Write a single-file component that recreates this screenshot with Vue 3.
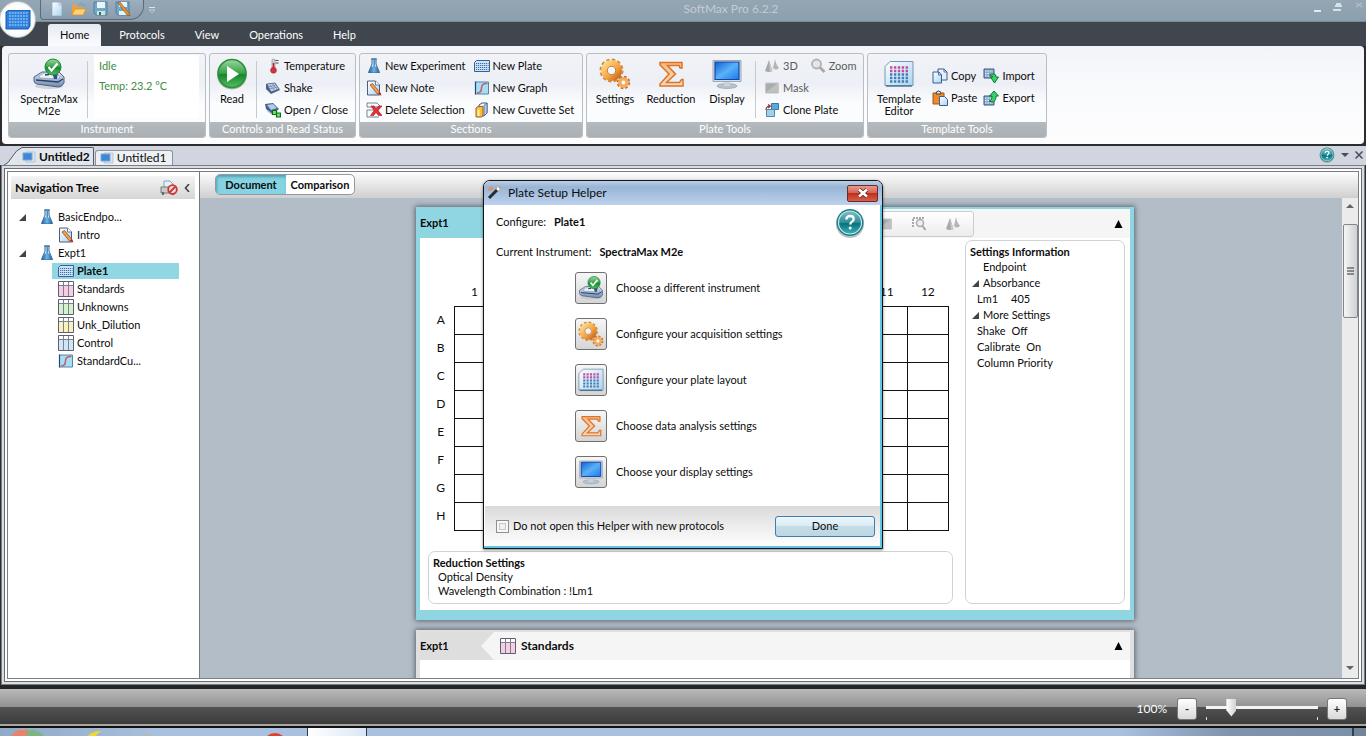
<script setup>
import { ref } from 'vue'

const tabs = ['Home', 'Protocols', 'View', 'Operations', 'Help']
const controls = [
  { icon: 'thermo', label: 'Temperature' },
  { icon: 'shake', label: 'Shake' },
  { icon: 'openclose', label: 'Open / Close' }
]
const sectionCols = [
  [
    { icon: 'flask', label: 'New Experiment' },
    { icon: 'note', label: 'New Note' },
    { icon: 'delete', label: 'Delete Selection' }
  ],
  [
    { icon: 'plate', label: 'New Plate' },
    { icon: 'graph', label: 'New Graph' },
    { icon: 'cuvette', label: 'New Cuvette Set' }
  ]
]
const plateTools = [
  { icon: 'gears', label: 'Settings' },
  { icon: 'sigma', label: 'Reduction' },
  { icon: 'display', label: 'Display' }
]
const templateCols = [
  [
    { icon: 'copy', label: 'Copy' },
    { icon: 'paste', label: 'Paste' }
  ],
  [
    { icon: 'import', label: 'Import' },
    { icon: 'export', label: 'Export' }
  ]
]
const tree = [
  { icon: 'flask', label: 'BasicEndpo...', root: true },
  { icon: 'note', label: 'Intro' },
  { icon: 'flask', label: 'Expt1', root: true },
  { icon: 'plate', label: 'Plate1', selected: true },
  { icon: 'table', label: 'Standards', tone: 'pink' },
  { icon: 'table', label: 'Unknowns', tone: 'green' },
  { icon: 'table', label: 'Unk_Dilution', tone: 'yellow' },
  { icon: 'table', label: 'Control', tone: 'blue' },
  { icon: 'graph', label: 'StandardCu...' }
]
const rows = ['A', 'B', 'C', 'D', 'E', 'F', 'G', 'H']
const options = [
  { icon: 'spectra', label: 'Choose a different instrument' },
  { icon: 'gears', label: 'Configure your acquisition settings' },
  { icon: 'template', label: 'Configure your plate layout' },
  { icon: 'sigma', label: 'Choose data analysis settings' },
  { icon: 'display', label: 'Choose your display settings' }
]
const zoom = ref(20)
const skip = ref(false)
</script>

<template>
  <div class="window">
    <svg class="defs" aria-hidden="true">
      <defs>
        <linearGradient id="gBlue" x1="0" y1="0" x2="1" y2="1"><stop offset="0" stop-color="#0f62d6" /><stop offset=".5" stop-color="#5bb0f8" /><stop offset="1" stop-color="#1a7be8" /></linearGradient>
        <linearGradient id="gGreen" x1="0" y1="0" x2="0" y2="1"><stop offset="0" stop-color="#9bd8a0" /><stop offset=".5" stop-color="#35a045" /><stop offset=".52" stop-color="#13852a" /><stop offset="1" stop-color="#52c060" /></linearGradient>
        <linearGradient id="gTeal" x1="0" y1="0" x2="0" y2="1"><stop offset="0" stop-color="#7fc0c4" /><stop offset=".5" stop-color="#2a8f98" /><stop offset=".55" stop-color="#0c6f7c" /><stop offset="1" stop-color="#3cb4bc" /></linearGradient>
        <linearGradient id="gGear" x1="0" y1="0" x2="1" y2="1"><stop offset="0" stop-color="#ffd98a" /><stop offset=".6" stop-color="#f3a341" /><stop offset="1" stop-color="#c9681e" /></linearGradient>
        <linearGradient id="gSig" x1="0" y1="0" x2="0" y2="1"><stop offset="0" stop-color="#fbb67c" /><stop offset="1" stop-color="#f6dcc0" /></linearGradient>
        <linearGradient id="gTray" x1="0" y1="0" x2="0" y2="1"><stop offset="0" stop-color="#dfe6f0" /><stop offset="1" stop-color="#6f88ad" /></linearGradient>
        <linearGradient id="gSheet" x1="0" y1="0" x2="1" y2="1"><stop offset="0" stop-color="#ffffff" /><stop offset="1" stop-color="#a9d4ef" /></linearGradient>
        <linearGradient id="gFlask" x1="0" y1="0" x2="1" y2="0"><stop offset="0" stop-color="#1f5f9c" /><stop offset=".5" stop-color="#6db4e4" /><stop offset="1" stop-color="#1f5f9c" /></linearGradient>
      </defs>
      <symbol id="logo" viewBox="0 0 26 20">
        <path d="M1 2L4 0h21v16l-2 3H1z" fill="#2f7fdc" stroke="#1857ad" />
        <path d="M4 3h19M4 6h19M4 9h19M4 12h19M4 15h19" stroke="#8fc4f6" stroke-width="1.6" stroke-dasharray="1.8 1" />
      </symbol>
      <symbol id="page" viewBox="0 0 16 16"><path d="M3 1h7l3 3v11H3z" fill="url(#gSheet)" stroke="#86a6c2" stroke-width=".7" /><path d="M10 1v3h3" fill="#fff" stroke="#86a6c2" stroke-width=".7" /></symbol>
      <symbol id="folder" viewBox="0 0 16 16"><path d="M1 4h5l1 2h6v8H1z" fill="#e9a33c" /><path d="M7 4q3-4 6-1l1-1v4h-4l2-1q-2-3-4 0z" fill="#6fa8dc" /><path d="M1 14l3-6h11l-3 6z" fill="#fdd27c" stroke="#d98a25" stroke-width=".7" /></symbol>
      <symbol id="disk" viewBox="0 0 16 16"><path d="M1 1h13v13H3l-2-2z" fill="#6fa9c9" stroke="#4d809f" /><path d="M4 1h8v6H4z" fill="#e8f4fa" /><path d="M4 10h8v4H4z" fill="#cfe6d4" /><path d="M6 11h2v3H6z" fill="#356c84" /></symbol>
      <symbol id="diskpen" viewBox="0 0 16 16"><path d="M1 1h13v13H3l-2-2z" fill="#6fa9c9" stroke="#4d809f" /><path d="M4 1h8v5H4zM4 10h8v4H4z" fill="#eaf3f8" /><path d="M3 2l2-1 9 11 1 3-3-1z" fill="#e89434" stroke="#8b4a14" stroke-width=".6" /></symbol>
      <symbol id="spectra" viewBox="0 0 34 32">
        <ellipse cx="17" cy="28" rx="14" ry="3" fill="#b9bec6" opacity=".6" />
        <path d="M2 19l8-5h17l5 5v6q-2 4-6 4L5 26q-3-1-3-3z" fill="url(#gTray)" stroke="#4b6286" />
        <path d="M7 18l5-3h12l4 4-2 2-18-1z" fill="#eef2f7" stroke="#8797b2" stroke-width=".7" />
        <path d="M13 17l4-.5M4 22l22 2 5-3" fill="none" stroke="#29406a" stroke-width="1.3" />
        <path d="M20 14h6l-1 7h-3z" fill="#31508a" />
        <circle cx="21" cy="9" r="8" fill="url(#gGreen)" stroke="#1e8a35" />
        <path d="M16.500 9l3 3.500 6-7" fill="none" stroke="#fff" stroke-width="2.200" />
      </symbol>
      <symbol id="read" viewBox="0 0 32 32"><circle cx="16" cy="16.500" r="15" fill="#a5aaa5" /><circle cx="16" cy="15.500" r="14" fill="url(#gGreen)" stroke="#2d8f3b" stroke-width="1.500" /><path d="M11 8l12 8-12 8z" fill="#fff" /></symbol>
      <symbol id="thermo" viewBox="0 0 16 16"><path d="M7 1.500q1.500-1 3 0V10H7z" fill="#cfd5da" stroke="#8d969e" stroke-width=".7" /><path d="M7.700 5h1.600v7H7.700z" fill="#cc2029" /><circle cx="8.500" cy="12.300" r="2.900" fill="#d9303a" stroke="#9b2028" stroke-width=".6" /><path d="M10.500 2.500h3M10.500 5h3" stroke="#3b4f57" /></symbol>
      <symbol id="shake" viewBox="0 0 16 16"><path d="M1 4l9-1 5 7-9 4-5-5z" fill="#46618a" /><path d="M2 4l8-1 4 6-8 3z" fill="#c4d2e4" stroke="#40587f" stroke-width=".7" /><path d="M5 5l5 6M7.500 4l5 6M3 7l8-2M4.500 9l8-2" stroke="#7186a8" stroke-width=".8" /></symbol>
      <symbol id="openclose" viewBox="0 0 16 16"><path d="M0 2l8-1 6 6-7 5-6-5z" fill="#426292" /><path d="M2 3l6-1 4 4-6 2z" fill="#b5cae4" /><path d="M3 9l4 3" stroke="#9cb4d0" stroke-width="1.500" /><path d="M7.500 8.500h4v4h-4zM11.500 11h4v4h-4z" fill="#6fe06c" stroke="#0c6f1a" stroke-width="1.200" /></symbol>
      <symbol id="flask" viewBox="0 0 16 16"><path d="M5 1h6M6 1v5L2.500 14.500h11L10 6V1z" fill="#d5e7f5" stroke="#3a6d9b" stroke-width="1" /><path d="M7.500 1h1.500v8H7.500z" fill="#4a8cc4" /><path d="M5 8.500h6l2.500 6h-11z" fill="url(#gFlask)" /></symbol>
      <symbol id="note" viewBox="0 0 16 16"><path d="M1.500 1h8l4 4v10h-12z" fill="url(#gSheet)" stroke="#4d5d80" /><path d="M9.500 1v4h4" fill="#fff" stroke="#4d5d80" stroke-width=".8" /><path d="M4 5l2.500-1.500 7 8.500 1 3-3-1z" fill="#f0a24a" stroke="#954d22" stroke-width=".8" /><path d="M12 13.500l2-1.500 1.500 3.500z" fill="#9c2832" /></symbol>
      <symbol id="delete" viewBox="0 0 16 16"><path d="M1 1h10l3 3M1 1v4h12M1 8h12M1 8v3M1 11v4h12" fill="none" stroke="#69788a" stroke-width=".9" /><path d="M5 4l3 0 2 2.500L12.500 4H16l-4 4.500 4 5h-3.500l-2.500-3-2.500 3H4.500l3.700-5z" fill="#e2313a" stroke="#a5121f" stroke-width=".6" /></symbol>
      <symbol id="plate" viewBox="0 0 16 12"><path d="M.5 2.500l2-2h13v11H.5z" fill="#cde2f5" stroke="#35628f" /><path d="M2 3.500h12.500M2 5.500h12.500M2 7.500h12.500M2 9.500h12.500" stroke="#356db0" stroke-dasharray="1.200 .8" stroke-width="1.200" /></symbol>
      <symbol id="graph" viewBox="0 0 16 16"><path d="M1.500 2h13v12h-13z" fill="#a9dcf5" stroke="#4f87ab" /><path d="M1.500 14.500V1.500" stroke="#1e4c78" stroke-width="1.200" /><path d="M3 13q4.500 0 4.500-5t6-4.500" fill="none" stroke="#b9676c" stroke-width="1.600" /></symbol>
      <symbol id="cuvette" viewBox="0 0 16 16"><path d="M5 3l3-2h5v10l-3 3H5z" fill="#eef2f8" stroke="#3d5689" /><path d="M10 3.500L13 1v10l-3 3z" fill="#bccae4" stroke="#3d5689" stroke-width=".7" /><path d="M2 6l2-1.500h5V13l-1.500 2H2z" fill="#f7be3b" stroke="#a06914" /><path d="M3.500 7.500h2V14h-2z" fill="#fff0b0" /></symbol>
      <symbol id="gears" viewBox="0 0 32 32">
        <circle cx="12.500" cy="12.500" r="10.500" fill="none" stroke="#cf8c3a" stroke-width="3" stroke-dasharray="3.300 2.200" />
        <circle cx="12.500" cy="12.500" r="7.500" fill="#fff" fill-opacity=".4" stroke="url(#gGear)" stroke-width="6" />
        <circle cx="12.500" cy="12.500" r="4.200" fill="none" stroke="#c07a35" stroke-width="1" />
        <circle cx="24.500" cy="24.500" r="5.500" fill="none" stroke="#c4702c" stroke-width="2.500" stroke-dasharray="2.500 1.800" />
        <circle cx="24.500" cy="24.500" r="3.700" fill="#fff" stroke="#f3aa5d" stroke-width="3.500" />
      </symbol>
      <symbol id="sigma" viewBox="0 0 32 32"><path d="M5 4.500h22V10h-2l-1-2.500H12.500l8 8.500-9 8.500h13l2-3h1.500v6.500h-23V26l9-10-9-9z" fill="url(#gSig)" stroke="#d9742c" stroke-width="1.500" /></symbol>
      <symbol id="display" viewBox="0 0 32 32"><ellipse cx="16" cy="28" rx="10" ry="2.500" fill="#b9c3cc" stroke="#8a97a3" stroke-width=".6" /><path d="M13 23h6v5h-6z" fill="#c9d3dc" /><path d="M2 2.500h28v21H2z" fill="#d5dde5" stroke="#9ca9b6" /><path d="M4 4h24v17.500H4z" fill="url(#gBlue)" stroke="#1546a4" stroke-width="1.200" /></symbol>
      <symbol id="cones" viewBox="0 0 16 16"><path d="M5 2l3.500 11q-3.500 2-7.500 0z" fill="#a6a9ac" /><path d="M5 2l1 12 2.500-1z" fill="#c9cbcd" /><path d="M11 1q.5 5 4 9-3 3-6 0z" fill="#b3b6b8" /></symbol>
      <symbol id="magnify" viewBox="0 0 16 16"><circle cx="6.500" cy="6" r="4.500" fill="#e5e6e7" stroke="#b0b2b4" stroke-width="1.800" /><path d="M10 9.500l4.500 4.500" stroke="#a8aaac" stroke-width="2.800" /></symbol>
      <symbol id="mask" viewBox="0 0 16 16"><path d="M1.500 3h13v10h-13z" fill="#a9acaf" stroke="#c5c7c9" /><path d="M2 12L14 3v9z" fill="#bdbfc1" /></symbol>
      <symbol id="maskzoom" viewBox="0 0 16 16"><path d="M2 11V2h11" fill="none" stroke="#aaa" stroke-width="2" stroke-dasharray="2 1" /><circle cx="9" cy="7" r="3.500" fill="#eee" stroke="#aaa" stroke-width="1.500" /><path d="M11.500 10l3 4" stroke="#a5a5a5" stroke-width="2" /></symbol>
      <symbol id="clone" viewBox="0 0 16 16"><path d="M7.500 1.500h7v6h-7z" fill="#5ca7dc" stroke="#3677aa" /><path d="M2.500 7.500h8v7h-8z" fill="#9ed1ee" stroke="#5686a8" /><path d="M2 8q0-4 4-4M4 2.500l2.500 1.500L4 6" fill="none" stroke="#9c3830" stroke-width="1.200" /></symbol>
      <symbol id="template" viewBox="0 0 30 27"><path d="M1 6l5-5h23v24H1z" fill="url(#gSheet)" stroke="#7798b0" /><path d="M2 25.500h26" stroke="#4b7796" stroke-width="1.500" /><path d="M6 7h19M6 10.500h19" stroke="#c24d9d" stroke-width="2.400" stroke-dasharray="2.400 1.500" /><path d="M6 14h19M6 17.500h19M6 21h19" stroke="#427db4" stroke-width="2.400" stroke-dasharray="2.400 1.500" /></symbol>
      <symbol id="copy" viewBox="0 0 16 16"><path d="M6 1h6l3 3v8H6z" fill="#e7f0fa" stroke="#3c5d95" /><path d="M1 4h6l2.500 3v8H1z" fill="url(#gSheet)" stroke="#3c5d95" /><path d="M6.500 4v3h3M12 1v3h3" fill="none" stroke="#3c5d95" stroke-width=".8" /></symbol>
      <symbol id="paste" viewBox="0 0 16 16"><path d="M1 3h11v11H1z" fill="#ef8a2b" stroke="#a4541a" /><path d="M4 4q0-3 2.500-3T9 4z" fill="#ddd" stroke="#444" /><path d="M7.500 6.500h5l3 3v6h-8z" fill="url(#gSheet)" stroke="#3c5d95" /></symbol>
      <symbol id="import" viewBox="0 0 16 16"><path d="M1 1h10v9H1z" fill="#8eabcd" stroke="#375883" /><path d="M2 3h8M2 5.500h8M2 8h8" stroke="#e6effa" stroke-dasharray="1.500 1" /><path d="M7 6h4q2 0 2 3h2.500l-4 6-4-6H10q0-1-3-1z" fill="#3bd069" stroke="#0b7a34" /></symbol>
      <symbol id="export" viewBox="0 0 16 16"><path d="M1 6h10v9H1z" fill="#8eabcd" stroke="#375883" /><path d="M2 8h8M2 10.500h8M2 13h8" stroke="#e6effa" stroke-dasharray="1.500 1" /><path d="M6 11q3 0 3-5H6.500l4.500-5 4.500 5H13q0 6-4 6z" fill="#3bd069" stroke="#0b7a34" /></symbol>
      <symbol id="table" viewBox="0 0 16 16"><path d="M.5 .5h15v15H.5z" fill="#fff" /><path d="M1 5h14v10H1z" fill="currentColor" /><path d="M5.500 1v14M10.500 1v14M1 4.500h14" fill="none" stroke="#7d7e92" /><path d="M.5 .5h15v15H.5z" fill="none" stroke="#5d5e70" /></symbol>
      <symbol id="noprint" viewBox="0 0 18 16"><path d="M4 7V1h6l3 3v3" fill="#e2f2f8" stroke="#7fa6b5" /><path d="M1 7h13v6H1z" fill="#c7c9cb" stroke="#777" /><path d="M3 12v3M13 12v3" stroke="#666" stroke-width="2" /><circle cx="12.500" cy="9.500" r="4.300" fill="#f1dcdb" stroke="#cd3532" stroke-width="1.800" /><path d="M9.500 12.500l6-6" stroke="#cd3532" stroke-width="1.800" /></symbol>
      <symbol id="help" viewBox="0 0 30 30"><circle cx="15" cy="16" r="14" fill="#8d9ba0" opacity=".6" /><circle cx="15" cy="14.500" r="13.500" fill="#1d7f89" /><circle cx="15" cy="14.500" r="11.500" fill="url(#gTeal)" stroke="#c9e7e9" stroke-width="1.200" /><path d="M11.300 11.500q.3-3.500 3.900-3.500 3.500 0 3.500 3 0 1.700-1.900 2.900-1.500 1-1.500 2.600" fill="none" stroke="#fff" stroke-width="2.300" /><circle cx="15.200" cy="20" r="1.500" fill="#fff" /></symbol>
      <symbol id="wand" viewBox="0 0 16 16"><path d="M2 13l9-9" stroke="#252d33" stroke-width="3" /><path d="M10 5l2-2" stroke="#fff" stroke-width="2.600" /><path d="M2 2l4 3M5 1v4M1 5l4-1" stroke="#ef8a45" stroke-width="1.300" /><circle cx="13" cy="2.500" r="1.200" fill="#e99540" /></symbol>
      <symbol id="docicon" viewBox="0 0 14 12"><path d="M4 1h9v10H4z" fill="#dbe4ee" stroke="#aab9c9" stroke-width=".7" /><path d="M1 2h9v7H1z" fill="#3f86d6" stroke="#79a9dd" /></symbol>
    </svg>

    <header class="top">
      <div class="titlebar">
        <div class="quick">
          <button aria-label="New"><svg class="i16"><use href="#page" /></svg></button>
          <button aria-label="Open"><svg class="i16"><use href="#folder" /></svg></button>
          <button aria-label="Save"><svg class="i16"><use href="#disk" /></svg></button>
          <button aria-label="Save as"><svg class="i16"><use href="#diskpen" /></svg></button>
        </div>
        <svg class="more" viewBox="0 0 8 8"><path d="M1 1.500h6M1.500 4h5L4 6.500z" fill="#5f707c" stroke="#eef3f6" stroke-width=".8" /></svg>
        <div class="apptitle">SoftMax Pro 6.2.2</div>
        <svg class="winctl" viewBox="0 0 56 14"><path d="M4 11h7" stroke="#fff" stroke-width="1.500" /><path d="M23 10h8M25 6h7M26 4h5" stroke="#eef3f6" stroke-width="1.300" /><path d="M46 3l6 4M52 3l-6 4" stroke="#b7bcc2" stroke-width="1.300" /></svg>
      </div>
      <nav class="menubar">
        <button v-for="(t, i) in tabs" :key="t" :class="{ active: i === 0 }">{{ t }}</button>
      </nav>
      <button class="orb" aria-label="Application menu"><svg class="orb-icon"><use href="#logo" /></svg></button>
    </header>

    <section class="ribbon">
      <div class="group g-instrument">
        <div class="gbody">
          <button class="big wide"><svg class="i32"><use href="#spectra" /></svg><span>SpectraMax M2e</span></button>
          <i class="sep"></i>
          <div class="status"><div>Idle</div><div>Temp: 23.2 °C</div></div>
        </div>
        <div class="gtitle">Instrument</div>
      </div>
      <div class="group g-controls">
        <div class="gbody">
          <button class="big narrow"><svg class="i32"><use href="#read" /></svg><span>Read</span></button>
          <i class="sep"></i>
          <div class="col">
            <button v-for="c in controls" :key="c.label" class="small"><svg class="i16"><use :href="'#' + c.icon" /></svg>{{ c.label }}</button>
          </div>
        </div>
        <div class="gtitle">Controls and Read Status</div>
      </div>
      <div class="group g-sections">
        <div class="gbody">
          <div v-for="(col, i) in sectionCols" :key="i" class="col">
            <button v-for="c in col" :key="c.label" class="small"><svg class="i16"><use :href="'#' + c.icon" /></svg>{{ c.label }}</button>
          </div>
        </div>
        <div class="gtitle">Sections</div>
      </div>
      <div class="group g-plate">
        <div class="gbody">
          <button v-for="p in plateTools" :key="p.label" class="big"><svg class="i32"><use :href="'#' + p.icon" /></svg><span>{{ p.label }}</span></button>
          <i class="sep"></i>
          <div class="col">
            <div class="pair">
              <button class="small off" disabled><svg class="i16"><use href="#cones" /></svg>3D</button>
              <button class="small off" disabled><svg class="i16"><use href="#magnify" /></svg>Zoom</button>
            </div>
            <button class="small off" disabled><svg class="i16"><use href="#mask" /></svg>Mask</button>
            <button class="small"><svg class="i16"><use href="#clone" /></svg>Clone Plate</button>
          </div>
        </div>
        <div class="gtitle">Plate Tools</div>
      </div>
      <div class="group g-template">
        <div class="gbody">
          <button class="big"><svg class="i32"><use href="#template" /></svg><span>Template Editor</span></button>
          <div v-for="(col, i) in templateCols" :key="i" class="col mid">
            <button v-for="c in col" :key="c.label" class="small"><svg class="i16"><use :href="'#' + c.icon" /></svg>{{ c.label }}</button>
          </div>
        </div>
        <div class="gtitle">Template Tools</div>
      </div>
    </section>

    <div class="doctabs">
      <svg class="slope" viewBox="0 0 18 18"><path d="M0 18Q4 17 8 10T18 .5V18z" fill="#e1e5ec" /><path d="M0 18Q4 17 8 10T18 .5" fill="none" stroke="#555b66" /></svg>
      <button class="doctab current"><svg class="i13"><use href="#docicon" /></svg>Untitled2</button>
      <button class="doctab"><svg class="i13"><use href="#docicon" /></svg>Untitled1</button>
      <div class="doctools">
        <svg class="i16"><use href="#help" /></svg>
        <svg class="tri" viewBox="0 0 8 8"><path d="M0 2h8L4 6z" fill="#4a4f57" /></svg>
        <svg class="tri" viewBox="0 0 8 8"><path d="M.5 .5l7 7M7.500 .5l-7 7" stroke="#4a4f57" stroke-width="1.500" /></svg>
      </div>
    </div>

    <div class="outer">
      <div class="middle">
        <main class="work">
          <aside class="nav">
            <div class="navhead"><b>Navigation Tree</b><svg class="noprint"><use href="#noprint" /></svg><svg class="chev" viewBox="0 0 6 8"><path d="M5 0L1.500 4 5 8" fill="none" stroke="#444" stroke-width="1.600" /></svg></div>
            <ul class="tree">
              <li v-for="n in tree" :key="n.label" :class="{ root: n.root, selected: n.selected }">
                <svg v-if="n.root" class="arrow" viewBox="0 0 7 7"><path d="M7 0v7H0z" fill="#444" /></svg>
                <span class="node"><svg class="i16" :class="n.tone"><use :href="'#' + n.icon" /></svg>{{ n.label }}</span>
              </li>
            </ul>
          </aside>
          <section class="doc">
            <div class="docbar">
              <div class="switch"><button class="on">Document</button><button>Comparison</button></div>
            </div>
            <div class="canvas">
              <div class="sheets">
                <article class="card plate">
                  <header class="cardhead">
                    <b class="tag">Expt1</b>
                    <div class="tools">
                      <svg class="i16"><use href="#mask" /></svg>
                      <svg class="i16"><use href="#maskzoom" /></svg>
                      <svg class="i16"><use href="#cones" /></svg>
                    </div>
                    <svg class="up" viewBox="0 0 8 8"><path d="M4 0l4 8H0z" /></svg>
                  </header>
                  <div class="cardbody">
                    <div class="left">
                      <table class="wells">
                        <thead><tr><th></th><th v-for="n in 12" :key="n">{{ n }}</th></tr></thead>
                        <tbody><tr v-for="r in rows" :key="r"><th>{{ r }}</th><td v-for="n in 12" :key="n"></td></tr></tbody>
                      </table>
                      <div class="box reduction">
                        <b>Reduction Settings</b>
                        <p>Optical Density</p>
                        <p>Wavelength Combination : !Lm1</p>
                      </div>
                    </div>
                    <div class="box settings">
                      <b>Settings Information</b>
                      <p class="in">Endpoint</p>
                      <p class="in fold"><svg class="arrow" viewBox="0 0 7 7"><path d="M7 0v7H0z" fill="#444" /></svg>Absorbance</p>
                      <p class="kv"><span>Lm1</span><span>405</span></p>
                      <p class="in fold"><svg class="arrow" viewBox="0 0 7 7"><path d="M7 0v7H0z" fill="#444" /></svg>More Settings</p>
                      <p class="kv tight"><span>Shake</span><span>Off</span></p>
                      <p class="kv tight"><span>Calibrate</span><span>On</span></p>
                      <p>Column Priority</p>
                    </div>
                  </div>
                </article>
                <article class="card std">
                  <header class="cardhead">
                    <b class="tag">Expt1</b>
                    <svg class="notch" viewBox="0 0 13 28"><path d="M13 0v28L0 14z" fill="#f5f5f5" /></svg>
                    <div class="cardtitle"><svg class="i16 pink"><use href="#table" /></svg><b>Standards</b></div>
                    <svg class="up" viewBox="0 0 8 8"><path d="M4 0l4 8H0z" /></svg>
                  </header>
                  <div class="blank"></div>
                </article>
              </div>
              <div class="scroll">
                <svg class="tri" viewBox="0 0 8 8"><path d="M0 6h8L4 2z" fill="#666" /></svg>
                <div class="thumb"><svg viewBox="0 0 7 8"><path d="M0 1h7M0 4h7M0 7h7" stroke="#333" stroke-width="1.200" /></svg></div>
                <svg class="tri end" viewBox="0 0 8 8"><path d="M0 2h8L4 6z" fill="#666" /></svg>
              </div>
            </div>
          </section>
        </main>
      </div>
    </div>

    <footer class="statusbar">
      <label for="zoom">100%</label>
      <button class="zbtn" aria-label="Zoom out">-</button>
      <div class="slider"><input id="zoom" v-model="zoom" type="range" min="0" max="100" /><div class="ticks"><i></i><i></i></div></div>
      <button class="zbtn" aria-label="Zoom in">+</button>
    </footer>
    <div class="taskbar">
      <svg class="taskicons" viewBox="0 0 300 9"><circle cx="26" cy="18" r="17" fill="#dce8ec" /><path d="M11 9q3-8 16-8v8z" fill="#e7826b" /><path d="M27 1q13 1 18 8H27z" fill="#7cb583" /><path d="M87 9q4-6 15-6-5 2-7 6z" fill="#f0d92b" /><path d="M138 9q8-4 15 0z" fill="#c9b780" /><circle cx="275" cy="17" r="12" fill="#e1402f" /></svg>
      <div class="task"></div>
      <div class="desk"></div>
    </div>

    <div class="dialog" role="dialog" aria-label="Plate Setup Helper">
      <div class="dtitle"><svg class="i16"><use href="#wand" /></svg><span>Plate Setup Helper</span><button class="close" aria-label="Close"><svg viewBox="0 0 12 10"><path d="M2 1.500l8 7M10 1.500l-8 7" stroke="#6d2622" stroke-width="4.200" /><path d="M2 1.500l8 7M10 1.500l-8 7" stroke="#fff" stroke-width="2.600" /></svg></button></div>
      <div class="dbody">
        <div class="dline"><span>Configure:</span><b>Plate1</b><svg class="dhelp"><use href="#help" /></svg></div>
        <div class="dline second"><span>Current Instrument:</span><b>SpectraMax M2e</b></div>
        <div class="opts">
          <button v-for="o in options" :key="o.label" class="opt"><span class="tile"><svg class="i26"><use :href="'#' + o.icon" /></svg></span>{{ o.label }}</button>
        </div>
      </div>
      <div class="dfoot">
        <label><input v-model="skip" type="checkbox" />Do not open this Helper with new protocols</label>
        <button class="done">Done</button>
      </div>
    </div>
  </div>
</template>

<style>
body { margin: 0; overflow: hidden; }
</style>

<style scoped>
* { box-sizing: border-box; }
.window { position: relative; display: flex; flex-direction: column; height: 100vh; overflow: hidden; font: 11px/14px Lato, "Open Sans", sans-serif; color: #0c0c0c; background: #2b2d30; }
button { font: inherit; color: inherit; background: none; border: 0; padding: 0; margin: 0; }
svg { display: block; flex: none; }
p { margin: 0; }
.defs { position: absolute; width: 0; height: 0; }
.i16 { width: 16px; height: 16px; }
.i13 { width: 14px; height: 12px; }
.i26 { width: 26px; height: 26px; }
.i32 { width: 34px; height: 32px; }
.pink { color: #f6cfe2; }
.green { color: #d3f3cf; }
.yellow { color: #f8f3bd; }
.blue { color: #cfe6f6; }

.top { position: relative; flex: none; }
.titlebar { position: relative; display: flex; height: 22px; background: linear-gradient(#94a6b3, #8b9fad); border-bottom: 1px solid #7b8b97; }
.quick { display: flex; align-items: center; gap: 6px; width: 104px; height: 20px; margin-left: 40px; padding: 0 0 2px 8px; background: linear-gradient(#9dafbd, #8a9cac); border: 1px solid #5d6b78; border-top: 0; border-radius: 0 0 14px 4px; }
.more { width: 8px; height: 8px; margin: 6px 0 0 4px; }
.apptitle { position: absolute; left: 0; right: 0; top: 2px; padding-left: 96px; text-align: center; color: #c3ccd3; font-size: 12px; }
.winctl { width: 56px; height: 14px; margin-left: auto; }
.menubar { display: flex; gap: 6px; height: 24px; padding: 2px 0 0 48px; background: #3f464d; }
.menubar button { padding: 0 12px; color: #fff; border-radius: 3px 3px 0 0; }
.menubar .active { color: #0c0c0c; background: linear-gradient(#e6eaf1, #fbfcfe); }
.orb { position: absolute; left: -1px; top: 1px; width: 37px; height: 37px; border-radius: 50%; background: radial-gradient(#fff 55%, #dfe3e6); border: 1px solid #b9c1c7; display: flex; align-items: center; justify-content: center; }
.orb-icon { width: 26px; height: 20px; }

.ribbon { flex: none; display: flex; gap: 3px; height: 98px; margin: 0 2px; padding: 7px 6px 6px; background: linear-gradient(#f2f4f9, #f9fafc 40%, #fdfdfe); border-radius: 4px; }
.group { display: flex; flex-direction: column; border: 1px solid #b9bec3; border-radius: 3px; overflow: hidden; background: linear-gradient(#f1f3f7, #eceff5 35%, #fbfcfd 60%); }
.g-instrument { width: 198px; }
.g-controls { width: 147px; }
.g-sections { width: 224px; }
.g-plate { width: 278px; }
.g-template { width: 180px; }
.gbody { flex: 1; min-height: 0; display: flex; padding: 1px 6px 0 4px; }
.g-plate .gbody { padding: 1px 0 0; }
.gtitle { flex: none; height: 15px; line-height: 14px; text-align: center; color: #fff; background: linear-gradient(#b4babe, #a9afb3); }
.big { flex: none; display: flex; flex-direction: column; align-items: center; width: 56px; padding-top: 3px; line-height: 12px; white-space: nowrap; }
.big span { margin-top: 3px; }
.big.wide { width: 72px; }
.big.wide span { width: 66px; white-space: normal; }
.big.narrow { width: 36px; }
.g-template .big { width: 54px; }
.g-template .big span { width: 54px; white-space: normal; }
.g-template .big .i32 { width: 30px; height: 32px; }
.sep { flex: none; width: 1px; margin: 6px 6px 4px; background: #c6cad0; }
.g-instrument .sep { margin-left: 2px; }
.g-plate .sep { margin-left: 0; margin-right: 8px; }
.g-controls .col { margin-left: 2px; }
.status { flex: 1; padding: 1px 5px; margin-bottom: 4px; background: #fff; color: #3f8b42; line-height: 20px; }
.col { display: flex; flex-direction: column; }
.col.mid { padding-top: 10px; margin-left: 6px; }
.g-sections .gbody { padding-left: 6px; gap: 8px; }
.small { display: flex; align-items: center; gap: 3px; height: 22px; white-space: nowrap; }
.pair { display: flex; gap: 12px; }
.off { color: #5c5c5c; }

.doctabs { flex: none; display: flex; align-items: flex-end; height: 19px; margin-top: 2px; padding-left: 4px; background: #d0d5df; }
.slope { width: 18px; height: 18px; }
.doctab { display: flex; align-items: center; gap: 3px; height: 15px; padding: 0 5px 0 4px; margin-left: 1px; font-size: 12px; line-height: 14px; background: #eef0f4; border: 1px solid #8d929c; border-bottom: 0; border-radius: 3px 3px 0 0; }
.doctab.current { height: 18px; margin-left: 0; padding: 0 3px 0 0; font-weight: 700; background: #e1e5ec; border-left: 0; border-color: #555b66; border-radius: 0 2px 0 0; }
.doctools { display: flex; align-items: center; gap: 6px; margin-left: auto; padding: 0 3px 2px 0; }
.tri { width: 8px; height: 8px; }

.outer { flex: 1; min-height: 0; display: flex; padding: 2px; margin: 0 1px; background: #d9dce2; border: 1px solid #7a7d82; }
.middle { flex: 1; display: flex; padding: 2px; background: #fff; border: 1px solid #6a6d70; }
.work { flex: 1; display: flex; min-width: 0; border: 1px solid #7b7f83; background: #fff; }
.nav { flex: none; width: 192px; border-right: 1px solid #75797d; padding: 4px 4px 0 3px; }
.navhead { display: flex; align-items: center; height: 23px; padding: 0 5px 0 4px; font-size: 12px; background: linear-gradient(#f4f4f4, #d6d6d6); }
.navhead b { flex: 1; }
.noprint { width: 18px; height: 16px; }
.chev { width: 6px; height: 8px; margin-left: 6px; }
.tree { list-style: none; margin: 9px 0 0; padding: 0; }
.tree li { position: relative; display: flex; align-items: center; height: 18px; padding-left: 41px; }
.tree .root { padding-left: 8px; }
.tree .root .node { margin-left: 13px; padding-left: 0; gap: 3px; }
.node { display: flex; align-items: center; gap: 3px; flex: 1; height: 16px; margin-right: 16px; padding-left: 6px; }
.selected .node { font-weight: 700; background: #93d6e3; }
.arrow { width: 7px; height: 7px; }

.doc { flex: 1; min-width: 0; display: flex; flex-direction: column; }
.docbar { flex: none; height: 26px; padding: 2px 15px; background: linear-gradient(#fdfdfd, #cfcfcf); }
.switch { display: flex; width: 140px; height: 21px; border: 1px solid #8f9ba0; border-radius: 5px; background: #fff; overflow: hidden; font-weight: 700; }
.switch button { flex: 1 0 auto; }
.switch .on { flex: none; width: 70px; background: #86d4e3; box-shadow: inset 1px 2px 3px #4f9fb0; }
.canvas { flex: 1; min-height: 0; display: flex; background: #b3bdc7; }
.sheets { flex: 1; min-width: 0; overflow: hidden; padding: 9px 8px 0 16px; display: flex; flex-direction: column; align-items: center; gap: 10px; }
.card { flex: none; width: 718px; max-width: 100%; box-shadow: 0 0 5px 1px #5d6670; background: #fff; }
.card.plate { border: solid #8fd5e2; border-width: 2px 4px 10px 4px; }
.cardhead { position: relative; display: flex; align-items: center; height: 29px; background: #f5f5f5; }
.tag { width: 64px; align-self: stretch; line-height: 28px; }
.plate .tag { background: #8fd5e2; }
.tools { display: flex; align-items: center; gap: 18px; width: 490px; height: 26px; padding-right: 12px; justify-content: flex-end; border: 1px solid #ccc; border-radius: 3px; background: linear-gradient(#fff, #ececec); }
.up { width: 9px; height: 8px; margin: 0 7px 0 auto; }
.cardbody { display: flex; gap: 12px; padding: 2px 5px 6px 8px; background: #fff; }
.left { flex: 1; min-width: 0; display: flex; flex-direction: column; }
.wells { border-collapse: collapse; table-layout: fixed; width: 521px; margin: 38px 0 20px; font-size: 12px; }
.wells th { font-weight: 400; height: 28px; padding: 0; }
.wells th:first-child { width: 26px; }
.wells td { border: 1px solid #111; height: 28px; padding: 0; }
.box { border: 1px solid #cfd3d6; border-radius: 7px; }
.reduction { height: 53px; padding: 4px 4px; line-height: 14px; }
.reduction p { padding-left: 5px; }
.settings { width: 160px; padding: 4px 4px; line-height: 16px; }
.settings b { display: block; line-height: 14px; }
.settings p { padding-left: 7px; }
.settings .in { padding-left: 13px; }
.settings .fold { display: flex; align-items: center; gap: 4px; padding-left: 2px; }
.kv { display: flex; gap: 13px; }
.kv.tight { gap: 6px; }
.card.std { border: solid #e0e0e0; border-width: 2px 4px 0 4px; }
.std .cardhead { height: 28px; }
.std .tag { width: 61px; background: #dedede; }
.notch { width: 13px; height: 28px; background: #dedede; }
.notch + .cardtitle { padding-left: 6px; }
.cardtitle { display: flex; align-items: center; gap: 5px; font-size: 12px; }
.blank { height: 120px; }
.scroll { width: 16px; display: flex; flex-direction: column; align-items: center; background: #ebebeb; padding: 4px 0 6px; }
.thumb { width: 15px; height: 94px; margin-top: 14px; display: flex; align-items: center; justify-content: center; border: 1px solid #84878a; border-radius: 2px; background: linear-gradient(90deg, #f6f6f6, #cfd0d3); }
.thumb svg { width: 7px; height: 8px; }
.end { margin-top: auto; }

.statusbar { flex: none; display: flex; align-items: center; height: 43px; padding: 4px 19px 2px 0; border-top: 4px solid #242526; border-bottom: 2px solid #111; justify-content: flex-end; background: linear-gradient(#bababa, #929292 48%, #525252 49%, #3c3c3c 94%, #a9a6a2 95%); color: #fff; font-size: 12px; }
.zbtn { width: 20px; height: 22px; border: 1px solid #777; border-radius: 3px; color: #222; background: linear-gradient(#fff, #d9d9d9); font-size: 11px; font-weight: 700; }
.statusbar label { margin-right: 10px; }
.slider { width: 112px; height: 22px; margin: 0 9px; position: relative; }
.slider input { -webkit-appearance: none; appearance: none; display: block; width: 100%; height: 18px; margin: 1px 0 0; background: linear-gradient(transparent 7px, #f4f4f4 7px, #f4f4f4 10px, transparent 10px); }
.slider input::-webkit-slider-thumb { -webkit-appearance: none; width: 10px; height: 18px; background: linear-gradient(90deg, #fff, #d2d2d2); clip-path: polygon(0 0, 100% 0, 100% 65%, 50% 100%, 0 65%); }
.ticks { display: flex; justify-content: space-between; }
.ticks i { width: 1px; height: 3px; background: #ddd; }
.taskbar { position: relative; flex: none; display: flex; height: 8px; overflow: hidden; background: linear-gradient(90deg, #8fa9c6, #a9c0de 12%, #a9c0de 82%, #7f93ad 90%, #7b90aa); }
.taskicons { width: 300px; height: 9px; }
.task { width: 60px; margin-left: 7px; background: linear-gradient(100deg, #fff, #dbe6f4); border: solid #2b3a4c; border-width: 0 1px; }
.desk { width: 14px; margin-left: auto; background: #72839a; border-left: 2px solid #33404f; }

.dialog { position: absolute; left: 50%; top: 180px; width: 400px; margin-left: -200px; border: 1px solid #10151b; border-radius: 7px 7px 0 0; background: #fff; box-shadow: inset -2px -2px 0 #5fc6e4, 0 1px 3px rgba(0, 0, 0, .5); overflow: hidden; padding: 0 2px 2px 1px; }
.dtitle { display: flex; align-items: center; gap: 5px; height: 24px; margin: 0 -2px 0 -1px; padding: 0 4px 0 3px; font-size: 12px; background: linear-gradient(#bccfe6, #98b5d6 25%, #bdd2ec); }
.close { display: flex; align-items: center; justify-content: center; width: 31px; height: 17px; margin-left: auto; border: 1px solid #6e2a2a; border-radius: 2px; background: linear-gradient(#e79a8e, #d5604f 48%, #bf2f20 50%, #d4604a); }
.close svg { width: 12px; height: 10px; }
.dbody { padding: 2px 0 18px 11px; }
.dline { display: flex; align-items: center; gap: 8px; height: 30px; }
.dhelp { width: 30px; height: 30px; margin: 2px 15px 0 auto; }
.opts { display: flex; flex-direction: column; gap: 14px; margin: 5px 0 0 79px; align-items: flex-start; }
.opt { display: flex; align-items: center; gap: 9px; white-space: nowrap; }
.tile { display: flex; align-items: center; justify-content: center; width: 32px; height: 32px; border: 1px solid #707070; border-radius: 3px; background: linear-gradient(#f6f6f6, #d5d5d5); }
.dfoot { display: flex; align-items: center; justify-content: space-between; height: 40px; padding: 0 5px 0 11px; background: linear-gradient(#dadada, #fff); }
.dfoot label { display: flex; align-items: center; gap: 4px; }
.dfoot input { -webkit-appearance: none; appearance: none; width: 13px; height: 13px; margin: 0; border: 1px solid #8e8f8f; background: #f1f1f1; box-shadow: inset 0 0 0 2px #f8f8f8, inset 0 0 0 3px #c5c8cb; }
.done { width: 100px; height: 21px; border: 1px solid #3c7fb1; border-radius: 3px; background: linear-gradient(#ecf6fb, #d9ebf4 48%, #c3dce8 50%, #bdd6e2); }
</style>
